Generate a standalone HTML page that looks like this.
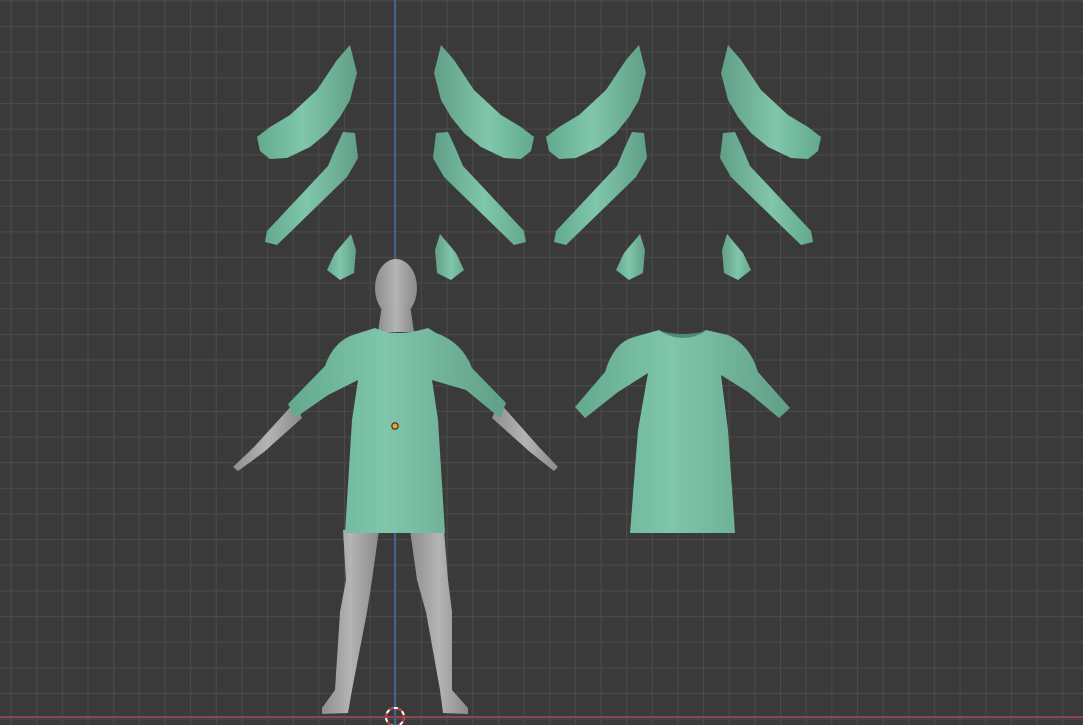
<!DOCTYPE html>
<html><head><meta charset="utf-8"><style>
html,body{margin:0;padding:0;background:#3a3a3a;overflow:hidden}
svg{display:block}
</style></head><body>
<svg width="1083" height="725" viewBox="0 0 1083 725" xmlns="http://www.w3.org/2000/svg">
<defs>
<pattern id="g" x="10.5" y="0.4" width="25.65" height="25.65" patternUnits="userSpaceOnUse">
<rect width="25.65" height="25.65" fill="#3a3a3a"/>
<path d="M0 0.5H25.65M0.5 0V25.65" stroke="#4a4a4a" stroke-width="1.2" fill="none"/>
</pattern>
<linearGradient id="cl" x1="0" x2="1"><stop offset="0" stop-color="#62a98e"/><stop offset="0.45" stop-color="#80c6ab"/><stop offset="1" stop-color="#609f87"/></linearGradient>
<linearGradient id="sk" x1="0" x2="1"><stop offset="0" stop-color="#8e8e8e"/><stop offset="0.5" stop-color="#b4b4b4"/><stop offset="1" stop-color="#8a8a8a"/></linearGradient>
<g id="grp">
<path d="M350,45 L357,73 L350,100 L340,117 L327,133 L310,147 L287,158 L270,159 L260,151 L257,137 L270,127 L290,115 L317,90 L337,60 Z" fill="url(#cl)"/>
<path d="M343,132 L355,133 L358,158 L347,177 L277,245 L265,242 L267,231 L328,166 L336,147 Z" fill="url(#cl)"/>
<path d="M351,234 L356,250 L354,273 L340,280 L327,270 L335,253 Z" fill="url(#cl)"/>
</g>
</defs>
<rect width="1083" height="725" fill="url(#g)"/>
<line x1="395" y1="0" x2="395" y2="725" stroke="#3f6aa8" stroke-width="1.6"/>
<line x1="0" y1="717" x2="1083" y2="717" stroke="#8e4550" stroke-width="2"/>

<use href="#grp"/>
<use href="#grp" transform="translate(791,0) scale(-1,1)"/>
<use href="#grp" transform="translate(289,0)"/>
<use href="#grp" transform="translate(1078,0) scale(-1,1)"/>

<g fill="url(#sk)">
<ellipse cx="396" cy="288" rx="21" ry="29"/>
<path d="M382,305 L410,305 L414,332 L378,332 Z"/>
<path d="M295,402 L302,418 L264,452 L238,471 L233,467 L254,447 Z"/>
<path d="M499,402 L492,418 L530,452 L554,471 L558,467 L539,447 Z"/>
<path d="M343,530 L379,530 L372,580 L367,612 L352,690 L348,713 L322,714 L322,708 L335,690 L340,612 L346,580 Z"/>
<path d="M410,530 L444,530 L448,580 L452,612 L452,690 L468,708 L468,714 L443,713 L440,690 L426,612 L417,580 Z"/>
</g>
<path d="M375,328 Q395,338 428,328 L436,333 Q462,342 472,368 L506,403 L500,418 L466,390 L432,380 L438,420 L445,533 L345,533 L352,420 L358,380 L328,395 L295,418 L288,404 L325,366 Q334,340 356,334 Z" fill="url(#cl)"/>
<path d="M659,330 Q683,344 706,330 L728,335 Q750,345 758,372 L790,408 L779,418 L748,392 L721,375 L728,430 L735,533 L630,533 L638,430 L648,373 L618,392 L585,418 L575,407 L605,372 Q614,342 634,337 Z" fill="url(#cl)"/>
<path d="M660,331 Q683,345 706,331 Q683,337 660,331 Z" fill="#4f8a73"/>
<circle cx="395" cy="426" r="3.2" fill="#f2a020" stroke="#222" stroke-width="1"/>
<circle cx="395" cy="717" r="9" fill="none" stroke="#fff" stroke-width="2"/>
<circle cx="395" cy="717" r="9" fill="none" stroke="#c0303a" stroke-width="2" stroke-dasharray="5 4"/>
</svg>
</body></html>
